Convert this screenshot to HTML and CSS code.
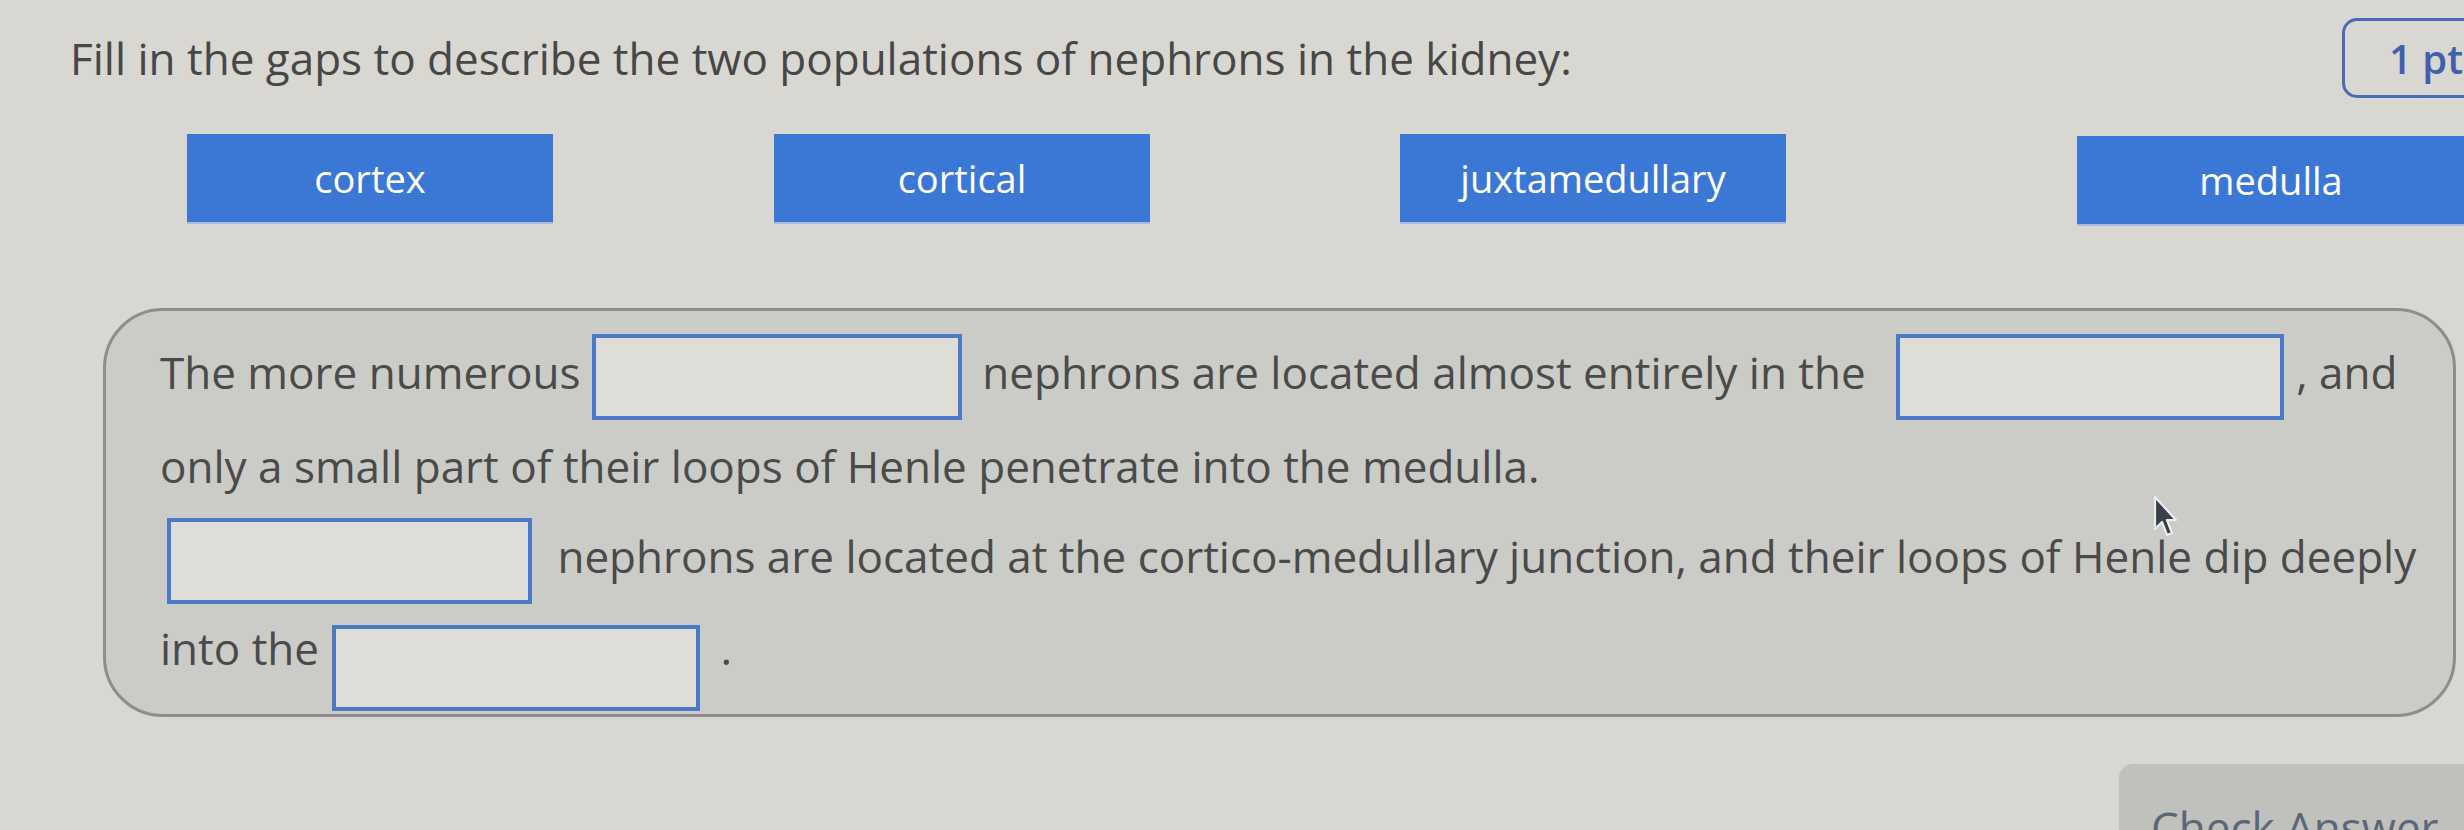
FILE: index.html
```html
<!DOCTYPE html>
<html lang="en">
<head>
<meta charset="utf-8">
<title>Nephrons</title>
<link rel="stylesheet" href="styles.css">
</head>
<body>
<div class="page">
  <header class="header">
    <h1 class="title">Fill in the gaps to describe the two populations of nephrons in the kidney:</h1>
    <div class="points">1 pt</div>
  </header>

  <div class="chips">
    <div class="chip chip-cortex">cortex</div>
    <div class="chip chip-cortical">cortical</div>
    <div class="chip chip-juxta">juxtamedullary</div>
    <div class="chip chip-medulla">medulla</div>
  </div>

  <section class="panel">
    <p class="para para-one">The more numerous <span class="gap gap-1"></span> nephrons are located almost entirely in the <span class="gap gap-2"></span>, and<br>only a small part of their loops of Henle penetrate into the medulla.</p>
    <p class="para para-two"><span class="gap gap-3"></span> nephrons are located at the cortico-medullary junction, and their loops of Henle dip deeply<br>into the <span class="gap gap-4"></span>.</p>
  </section>

  <div class="footer">
    <button class="check">Check Answer</button>
  </div>

  <svg class="cursor" width="26" height="46" viewBox="0 0 26 46" aria-hidden="true">
    <path d="M3 2 L3 34 L10 27 L15 40 L20 38 L15 25 L24 25 Z" fill="#38414e" stroke="#eeeeea" stroke-width="2.2" stroke-linejoin="round"/>
  </svg>
</div>
</body>
</html>
```

FILE: styles.css
```css
html, body {
  margin: 0;
  padding: 0;
  width: 2464px;
  height: 830px;
  overflow: hidden;
  background: #d8d7d1;
}

.page {
  position: relative;
  width: 2464px;
  height: 830px;
  overflow: hidden;
  font-family: "Open Sans", "Noto Sans", sans-serif;
  color: #4b4b4b;
}

.header {
  display: flex;
  align-items: flex-start;
  padding-left: 70px;
}

.title {
  margin: 28px 0 0 0;
  font-size: 44px;
  font-weight: 400;
  line-height: normal;
  color: #474747;
  white-space: nowrap;
}

.points {
  flex-shrink: 0;
  margin-left: auto;
  margin-right: -64px;
  margin-top: 18px;
  width: 186px;
  height: 80px;
  box-sizing: border-box;
  border: 3px solid #4b69b8;
  border-radius: 15px;
  padding-left: 44px;
  display: flex;
  align-items: center;
  font-size: 40px;
  font-weight: 600;
  color: #4060ad;
}

.chips {
  display: flex;
  margin-top: 36px;
  padding-left: 187px;
}

.chip {
  flex-shrink: 0;
  box-sizing: border-box;
  height: 88px;
  background: #3b78d5;
  color: #ffffff;
  font-size: 38px;
  display: flex;
  align-items: center;
  justify-content: center;
  box-shadow: 0 2px 0 #a9bde0;
}

.chip-cortex { width: 366px; margin-right: 221px; }
.chip-cortical { width: 376px; margin-right: 250px; }
.chip-juxta { width: 386px; margin-right: 291px; }
.chip-medulla { width: 440px; margin-top: 2px; padding-right: 52px; }

.panel {
  margin: 84px 0 0 103px;
  width: 2353px;
  box-sizing: border-box;
  border: 3px solid #8d8d8b;
  border-radius: 60px;
  background: #cbcbc7;
  padding: 15px 20px 3px 54px;
  font-size: 44px;
  color: #4a4a4a;
}

.para {
  margin: 0;
  white-space: nowrap;
}

.para-one { line-height: 92px; }
.para-two { line-height: 88px; }

.gap {
  display: inline-block;
  box-sizing: border-box;
  height: 86px;
  border: 4px solid #4b79c6;
  background: #dedDd8;
  vertical-align: middle;
}

.gap-1 { width: 370px; margin: 0 9px 0 0; }
.gap-2 { width: 388px; margin: 0 12px 0 19px; }
.gap-3 { width: 365px; margin: 0 14px 0 7px; }
.gap-4 { width: 368px; margin: 0 20px 0 2px; vertical-align: -46px; }

.footer {
  display: flex;
  justify-content: flex-end;
  margin-top: 47px;
}

.check {
  flex-shrink: 0;
  width: 400px;
  height: 120px;
  margin-right: -55px;
  border: none;
  border-radius: 14px;
  background: #c0c0bc;
  font-family: "Open Sans", "Noto Sans", sans-serif;
  font-size: 44px;
  color: #5b6777;
  text-align: left;
  padding: 33px 0 0 32px;
  display: flex;
  align-items: flex-start;
}

.cursor {
  position: absolute;
  left: 2152px;
  top: 495px;
}
```
